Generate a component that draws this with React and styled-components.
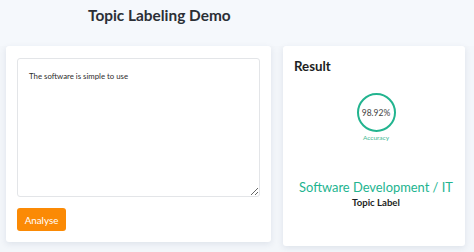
import React from "react";
import styled, { createGlobalStyle } from "styled-components";

const Global = createGlobalStyle`
  html, body { margin: 0; padding: 0; background: #f3f6fa; }
  body { font-family: Lato, "Open Sans", sans-serif; }
  * { box-sizing: border-box; }
`;

const Page = styled.div`
  width: 474px;
  height: 252px;
  background: #f3f6fa;
  display: flex;
  flex-direction: column;
`;

const Header = styled.header`
  height: 46px;
  padding: 5px 0 0 88px;
  background: #f5f8fc;
`;

const Title = styled.h1`
  margin: 0;
  font-size: 15.4px;
  font-weight: 700;
  color: #2b2f36;
  line-height: 20px;
`;

const Grid = styled.main`
  display: grid;
  grid-template-columns: 265px 182px;
  column-gap: 12px;
  padding-left: 6px;
  align-items: start;
`;

const Card = styled.section`
  background: #ffffff;
  border-radius: 3px;
  box-shadow: 0 2px 6px rgba(40, 60, 100, 0.1);
  height: ${(p) => p.$h}px;
  padding: 12px ${(p) => p.$pr || 11}px 11px 11px;
  display: flex;
  flex-direction: column;
`;

const TextArea = styled.textarea`
  width: 243px;
  height: 139px;
  border: 1px solid #e3e5e8;
  border-radius: 3px;
  padding: 12px 11px;
  font-family: Lato, sans-serif;
  font-size: 7.8px;
  color: #2e2e2e;
  resize: vertical;
  outline: none;
`;

const Button = styled.button`
  margin-top: 11px;
  width: 49px;
  height: 23px;
  background: #fb8a05;
  border: none;
  border-radius: 3px;
  color: #fff;
  font-family: Lato, sans-serif;
  font-size: 9.8px;
  padding: 0;
`;

const ResultTitle = styled.h2`
  margin: 0;
  font-size: 13.3px;
  font-weight: 700;
  color: #1d1f23;
  line-height: 16px;
`;

const Meter = styled.div`
  margin: 19px auto 0;
  display: flex;
  flex-direction: column;
  align-items: center;
`;

const Ring = styled.div`
  width: 39px;
  height: 39px;
  border: 2px solid #22b48f;
  border-radius: 50%;
  display: flex;
  align-items: center;
  justify-content: center;
  font-size: 8.5px;
  color: #444;
`;

const MeterLabel = styled.div`
  margin-top: 2px;
  font-size: 6.5px;
  color: #3cb893;
`;

const Topic = styled.div`
  margin-top: 38px;
  text-align: center;
  white-space: nowrap;
  font-size: 12.9px;
  color: #22b48f;
  line-height: 16px;
`;

const TopicLabel = styled.div`
  margin-top: 2px;
  text-align: center;
  font-size: 9.6px;
  font-weight: 700;
  color: #1d1f23;
`;

export default function App() {
  return (
    <Page>
      <Global />
      <Header>
        <Title>Topic Labeling Demo</Title>
      </Header>
      <Grid>
        <Card $h={196}>
          <TextArea defaultValue="The software is simple to use" />
          <Button>Analyse</Button>
        </Card>
        <Card $h={200} $pr={7}>
          <ResultTitle>Result</ResultTitle>
          <Meter>
            <Ring>98.92%</Ring>
            <MeterLabel>Accuracy</MeterLabel>
          </Meter>
          <Topic>Software Development / IT</Topic>
          <TopicLabel>Topic Label</TopicLabel>
        </Card>
      </Grid>
    </Page>
  );
}
